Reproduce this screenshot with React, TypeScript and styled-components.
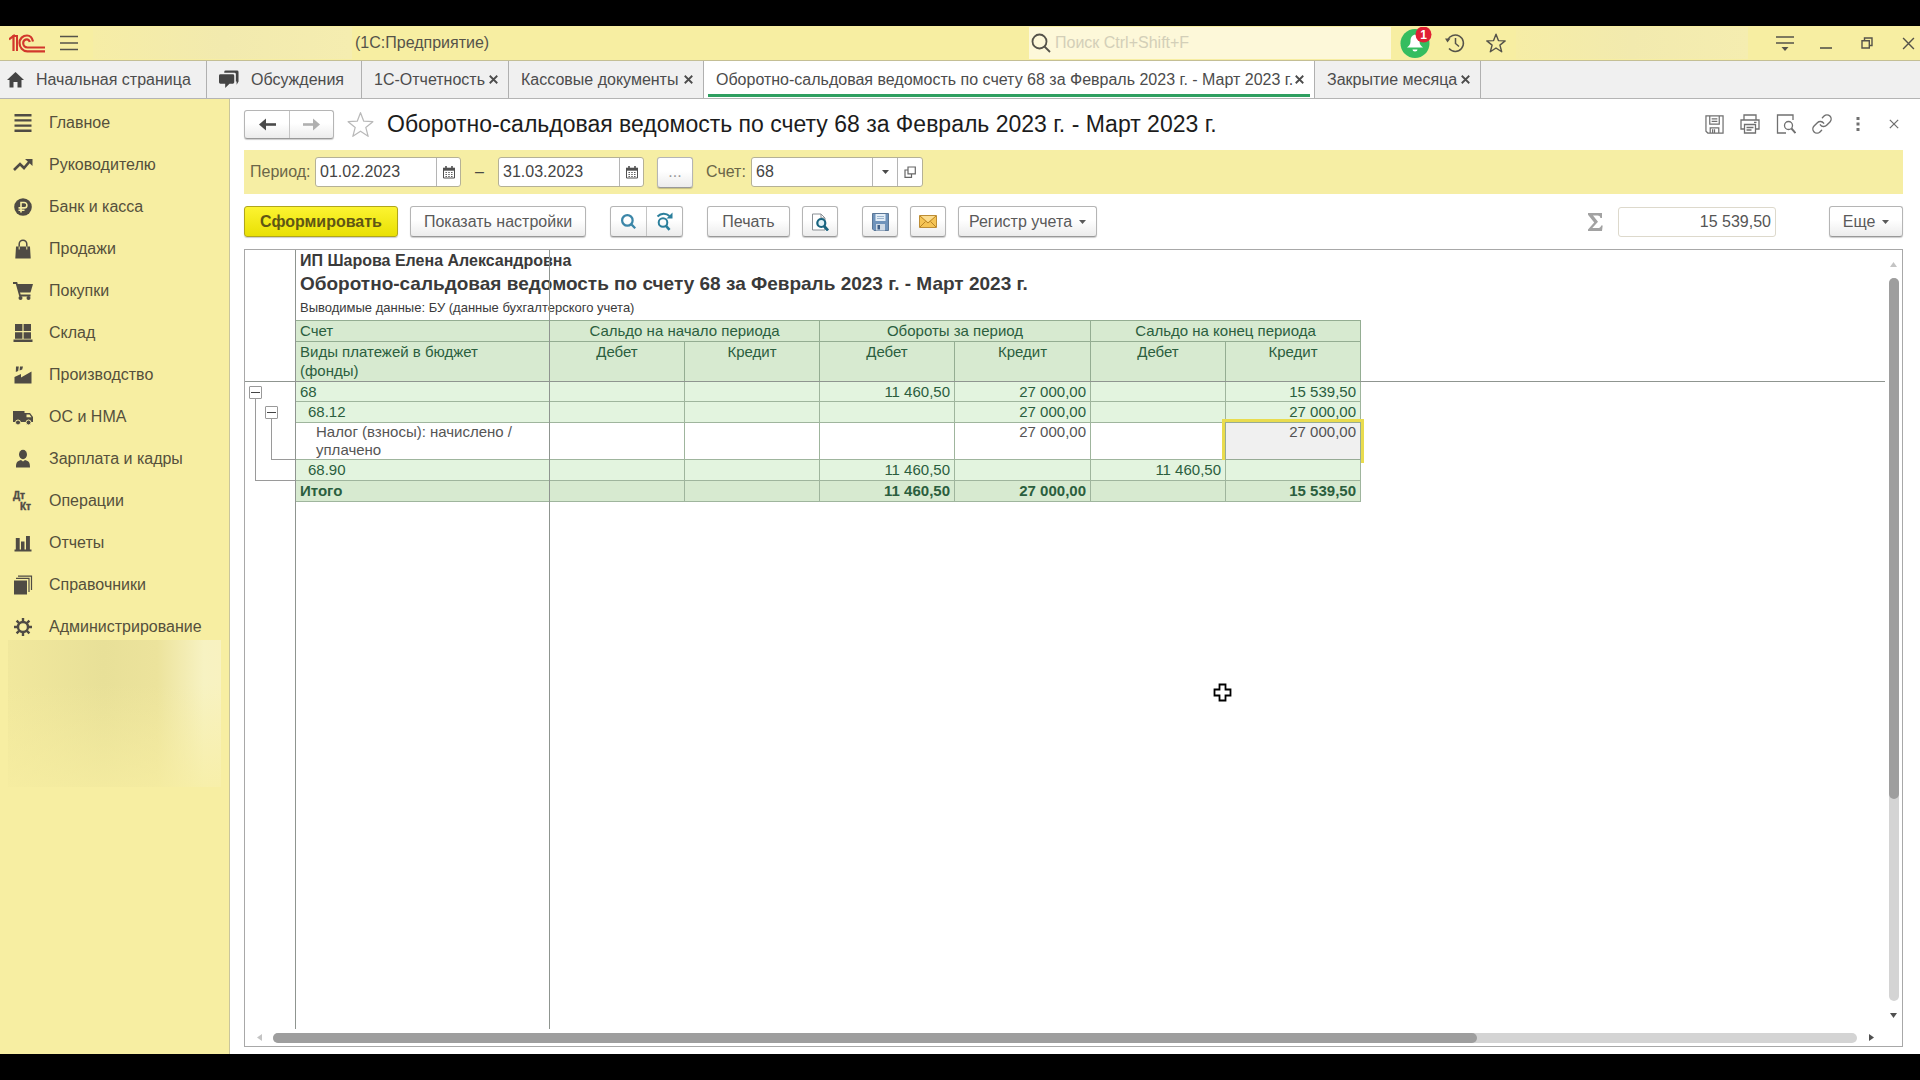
import React from "react";
import styled, { createGlobalStyle, css } from "styled-components";

const GlobalStyle = createGlobalStyle`
  *, *::before, *::after { box-sizing: border-box; }
  body { margin: 0; background: #000; }
  body, button, input { font-family: "Liberation Sans", Arial, sans-serif; font-size: 16px; color: #4a4a46; }
  button { margin: 0; padding: 0; border: 0; background: none; cursor: pointer; }
  svg { display: block; flex: none; }
`;

/* ---------- frame ---------- */

const Frame = styled.div`
  display: flex;
  flex-direction: column;
  min-height: 100vh;
  padding: 26px 0;
  background: #000;
`;

const Body = styled.div`
  flex: 1;
  display: flex;
  background: #fff;
`;

/* ---------- title bar ---------- */

const TitleBar = styled.header`
  display: flex;
  align-items: center;
  height: 34px;
  background: #f7eea2;
`;

const TitleLeft = styled.div`
  flex: 1;
  display: flex;
  align-items: center;
  height: 100%;
  padding-left: 9px;
`;

const TitleRight = styled.div`
  flex: none;
  display: flex;
  align-items: center;
  justify-content: space-between;
  width: 529px;
  height: 100%;
  padding-left: 7px;
`;

const IconButton = styled.button<{ $w?: number }>`
  display: flex;
  align-items: center;
  justify-content: center;
  width: ${(p) => p.$w ?? 36}px;
  height: 32px;
  color: #55534a;
`;

const Smudge = styled.div<{ $w: number }>`
  width: ${(p) => p.$w}px;
  height: 32px;
  background: linear-gradient(90deg, #f6eda6, #f2eaae 50%, #f5edb0);
`;

const AppName = styled.span`
  margin-left: 3px;
  color: #55534a;
`;

const Group = styled.div<{ $gap?: number }>`
  display: flex;
  align-items: center;
  gap: ${(p) => p.$gap ?? 0}px;
`;

const Search = styled.label`
  flex: none;
  display: flex;
  align-items: center;
  gap: 4px;
  width: 362px;
  height: 32px;
  padding-left: 2px;
  background: #fdf8d9;
  color: #55534a;
`;

const SearchInput = styled.input`
  flex: 1;
  min-width: 0;
  border: 0;
  padding: 0;
  outline: 0;
  background: none;
  &::placeholder { color: #d3cfb8; opacity: 1; }
`;

/* ---------- tabs ---------- */

const Tabs = styled.nav`
  display: flex;
  height: 39px;
  background: #f0f0f0;
  border-top: 1px solid #c4bf95;
  border-bottom: 1px solid #b4b4b4;
`;

const Tab = styled.div<{ $w: number; $pad?: number; $active?: boolean }>`
  flex: none;
  display: flex;
  align-items: center;
  justify-content: space-between;
  width: ${(p) => p.$w}px;
  padding: 0 10px 0 ${(p) => p.$pad ?? 12}px;
  border-right: 1px solid #b0b0b0;
  ${(p) =>
    p.$active &&
    css`
      background: linear-gradient(#2f9f60, #2f9f60) 4px 33px / calc(100% - 8px) 3px no-repeat #fff;
    `}
`;

const TabLabel = styled.button`
  display: flex;
  align-items: center;
  gap: 12px;
  white-space: nowrap;
  color: #4c4c4c;
`;

const CloseTab = styled.button`
  display: flex;
  color: #4c4c4c;
`;

/* ---------- side menu ---------- */

const Side = styled.aside`
  flex: none;
  width: 230px;
  padding-top: 3px;
  background: #f7eea2;
  border-right: 1px solid #c9c59c;
`;

const SideItem = styled.a`
  display: flex;
  align-items: center;
  gap: 15px;
  height: 42px;
  padding-left: 12px;
  color: #55503c;
  text-decoration: none;
`;

const SideHaze = styled.div`
  height: 147px;
  margin: -8px 8px 0;
  background: linear-gradient(180deg, rgba(247, 238, 162, 0) 30%, rgba(247, 238, 162, 0.75) 100%),
    linear-gradient(90deg, #f1e89d 0%, #e8e098 45%, #ece39c 70%, #f7f2c2 92%, #f8f2c0 100%);
`;

/* ---------- main ---------- */

const Main = styled.main`
  flex: 1;
  min-width: 0;
  display: flex;
  flex-direction: column;
  padding: 10px 17px 7px 14px;
`;

const Head = styled.div`
  display: flex;
  align-items: center;
  height: 30px;
  margin-bottom: 11px;
`;

const Title = styled.h1`
  flex: 1;
  margin: 0 0 0 13px;
  font-size: 23px;
  font-weight: 400;
  color: #1c1c1c;
`;

const raised = css`
  border: 1px solid #b5b5b5;
  border-bottom-color: #999;
  border-radius: 3px;
  background: linear-gradient(#fff 45%, #ececec);
  box-shadow: 0 1px 1px rgba(0, 0, 0, 0.2);
`;

const Joined = styled.div<{ $h?: number }>`
  ${raised}
  display: flex;
  height: ${(p) => p.$h ?? 31}px;
  & > button + button { border-left: 1px solid #c4c4c4; }
`;

const JoinedButton = styled.button<{ $w: number; $c?: string }>`
  display: flex;
  align-items: center;
  justify-content: center;
  width: ${(p) => p.$w}px;
  height: 100%;
  color: ${(p) => p.$c ?? "#4a4a4a"};
`;

const FavButton = styled.button`
  margin-left: 13px;
`;

const HeadActions = styled.div`
  display: flex;
  margin-right: -9px;
  & > button { color: #707070; }
`;

const FilterBar = styled.form`
  display: flex;
  align-items: center;
  height: 44px;
  margin-bottom: 12px;
  padding-left: 6px;
  background: #f6eea4;
`;

const FieldLabel = styled.label<{ $w: number }>`
  width: ${(p) => p.$w}px;
  color: #6b6648;
`;

const Field = styled.div`
  display: flex;
  height: 30px;
  border: 1px solid #b5b196;
  border-radius: 3px;
  background: #fff;
  & > button { border-left: 1px solid #b5b5b5; }
`;

const FieldInput = styled.input`
  width: 120px;
  border: 0;
  padding: 0 4px;
  outline: 0;
  background: none;
  color: #444;
`;

const Dash = styled.span`
  width: 37px;
  text-align: center;
`;

const Button = styled.button<{ $w: number; $primary?: boolean }>`
  ${raised}
  display: flex;
  align-items: center;
  justify-content: center;
  gap: 7px;
  width: ${(p) => p.$w}px;
  height: 31px;
  color: #5a5a5a;
  ${(p) =>
    p.$primary &&
    css`
      border-color: #b0a61c;
      background: linear-gradient(#fcf431, #e9e004);
      color: #5f5614;
      font-weight: 700;
    `}
`;

const PeriodButton = styled(Button)`
  margin: 0 13px;
  color: #999;
`;

const Toolbar = styled.div`
  display: flex;
  align-items: center;
  gap: 24px;
  height: 31px;
  margin-bottom: 12px;
`;

const ToolGroup = styled.div<{ $end?: boolean }>`
  display: flex;
  align-items: center;
  gap: 12px;
  margin-left: ${(p) => (p.$end ? "auto" : "0")};
`;

const SumLabel = styled.label`
  display: flex;
  align-items: center;
  gap: 15px;
  margin-right: 41px;
  color: #a2a2a2;
`;

const SumInput = styled.input`
  width: 158px;
  height: 30px;
  padding: 0 4px;
  border: 1px solid #ddd9cc;
  border-radius: 3px;
  text-align: right;
  color: #555;
`;

/* ---------- spreadsheet ---------- */

const Sheet = styled.section`
  flex: 1;
  display: grid;
  grid-template-columns: 1fr 17px;
  grid-template-rows: 1fr 17px;
  border: 1px solid #a8a8a8;
  background: #fff;
`;

const View = styled.div`
  position: relative;
  overflow: hidden;
`;

const FreezeV = styled.div<{ $x: number }>`
  position: absolute;
  top: 0;
  bottom: 0;
  left: ${(p) => p.$x}px;
  width: 1px;
  background: #8f9590;
`;

const FreezeH = styled.div`
  position: absolute;
  left: 0;
  right: 0;
  top: 131px;
  height: 1px;
  background: #8f9590;
`;

const DocHead = styled.div`
  height: 70px;
  padding-left: 55px;
  color: #3a3a3a;
  white-space: nowrap;
`;

const Org = styled.div`
  line-height: 22px;
  font-weight: 700;
`;

const DocTitle = styled.h2`
  margin: 0;
  font-size: 19px;
  line-height: 24px;
  font-weight: 700;
`;

const DocNote = styled.div`
  font-size: 13px;
  line-height: 24px;
`;

const Table = styled.table`
  table-layout: fixed;
  width: 1116px;
  border-collapse: separate;
  border-spacing: 0;
  font-size: 15px;
  color: #2b5e3e;
`;

type Tone = "head" | "light" | "plain";
const toneBg: Record<Tone, string> = { head: "#d7ead0", light: "#e3f4df", plain: "#fff" };

const Row = styled.tr<{ $h: number; $tone: Tone; $bold?: boolean }>`
  height: ${(p) => p.$h}px;
  font-weight: ${(p) => (p.$bold ? 700 : 400)};
  & > .cell {
    background: ${(p) => toneBg[p.$tone]};
    color: ${(p) => (p.$tone === "plain" ? "#555" : "inherit")};
    line-height: ${(p) => (p.$tone === "plain" ? 18 : 19)}px;
  }
`;

const cellBase = css`
  position: relative;
  padding: 0 4px;
  vertical-align: top;
  border-right: 1px solid #9fb59d;
  border-bottom: 1px solid #9fb59d;
`;

const HeadCell = styled.th<{ $left?: boolean; $top?: boolean }>`
  ${cellBase}
  border-color: #94ad92;
  border-top: ${(p) => (p.$top ? "1px solid #94ad92" : "0")};
  font-weight: 400;
  text-align: ${(p) => (p.$left ? "left" : "center")};
`;

const NameCell = styled.th<{ $level: number }>`
  ${cellBase}
  font-weight: inherit;
  text-align: left;
  padding-left: ${(p) => 4 + p.$level * 8}px;
`;

const NumCell = styled.td`
  ${cellBase}
  text-align: right;
  white-space: nowrap;
`;

const Selection = styled.div`
  position: absolute;
  inset: -4px;
  border: 3px solid #e9dc4e;
  background: rgba(60, 60, 60, 0.08);
`;

const TreeCell = styled.td`
  position: relative;
  padding: 0;
`;

const Branch = styled.div<{ $x: number; $from: number; $elbow?: boolean }>`
  position: absolute;
  top: ${(p) => p.$from}px;
  bottom: 0;
  left: ${(p) => p.$x}px;
  right: 0;
  border-left: 1px solid #9a9a9a;
  border-bottom: ${(p) => (p.$elbow ? "1px solid #9a9a9a" : "0")};
`;

const Toggle = styled.button<{ $level: number }>`
  position: relative;
  z-index: 1;
  display: flex;
  align-items: center;
  justify-content: center;
  width: 13px;
  height: 13px;
  margin-left: ${(p) => 4 + p.$level * 16}px;
  border: 1px solid #999;
  border-radius: 1px;
  background: #fff;
  &::before {
    content: "";
    width: 9px;
    height: 1px;
    background: #444;
  }
`;

const ScrollBar = styled.div<{ $vertical?: boolean }>`
  display: flex;
  flex-direction: ${(p) => (p.$vertical ? "column" : "row")};
  align-items: center;
`;

const ScrollArrow = styled.button<{ $c: string }>`
  display: flex;
  align-items: center;
  justify-content: center;
  flex: none;
  width: 28px;
  height: 28px;
  color: ${(p) => p.$c};
`;

const Track = styled.div<{ $vertical?: boolean }>`
  flex: 1;
  width: ${(p) => (p.$vertical ? "10px" : "auto")};
  height: ${(p) => (p.$vertical ? "auto" : "10px")};
  border-radius: 5px;
  background: #d4d4d4;
`;

const Thumb = styled.div<{ $vertical?: boolean }>`
  width: ${(p) => (p.$vertical ? "100%" : "76%")};
  height: ${(p) => (p.$vertical ? "72%" : "100%")};
  border-radius: 5px;
  background: #9e9e9e;
`;

const Pointer = styled.svg`
  position: absolute;
  left: 968px;
  top: 433px;
`;

/* ---------- icons ---------- */

const Logo = () => (
  <svg width="36" height="19" viewBox="0 0 36 19" fill="none" stroke="#d2372c" strokeWidth="2.2">
    <path d="M0 5.5 4.5 2v15" />
    <path d="M3.5 2H8v15" strokeWidth="2" />
    <path d="M24 7.5C23.2 3.5 20.5 1.5 18 1.5c-4.200 0-7.500 3.200-7.500 7.500s3.200 8.300 7.800 8.300H36" />
    <path d="M20.8 8C20.3 6.2 19.2 5.3 17.9 5.3c-2.100 0-3.700 1.600-3.700 3.800 0 2.400 1.700 4.400 4.300 4.400H36" />
  </svg>
);

const Burger = () => (
  <svg width="18" height="16" viewBox="0 0 18 16" stroke="currentColor" strokeWidth="1.6">
    <path d="M0 1.5h18M0 8h18M0 14.5h18" />
  </svg>
);

const Magnifier = ({ size = 20, width = 1.8 }: { size?: number; width?: number }) => (
  <svg width={size} height={size} viewBox="0 0 20 20" fill="none" stroke="currentColor" strokeWidth={width}>
    <circle cx="8.5" cy="8.5" r="7" />
    <path d="M13.5 13.5 19 19" />
  </svg>
);

const Bell = () => (
  <svg width="32" height="32" viewBox="0 0 32 32">
    <circle cx="15" cy="16.5" r="14.5" fill="#35bd5f" />
    <path d="M15 7.5c-3.500 1-4.500 3.500-4.500 7 0 3-1.500 4.500-3.500 6h16c-2-1.500-3.500-3-3.500-6 0-3.500-1-6-4.500-7Z" fill="#fff" />
    <path d="M12.5 22.5h5a2.5 2 0 0 1-5 0Z" fill="#fff" />
    <circle cx="23.5" cy="7.5" r="8" fill="#e01f34" />
    <text x="23.5" y="11.5" fill="#fff" fontSize="12" fontWeight="700" textAnchor="middle">1</text>
  </svg>
);

const History = () => (
  <svg width="20" height="20" viewBox="0 0 20 20" fill="none" stroke="currentColor" strokeWidth="1.5">
    <path d="M2.6 7.2A8.2 8.2 0 1 1 4 15.6" />
    <path d="M10.5 5v5.500l3.500 3" />
    <path d="M0 5.5h5.500L2.5 9.5Z" fill="currentColor" stroke="none" />
  </svg>
);

const Star = ({ size, color, width }: { size: number; color: string; width: number }) => (
  <svg width={size} height={size} viewBox="0 0 24 24" fill="none" stroke={color} strokeWidth={width} strokeLinejoin="round">
    <path d="m12 1.5 2.9 7.6 8.1.4-6.300 5.100 2.100 7.900L12 18l-6.800 4.500 2.100-7.900L1 9.5l8.100-.4Z" />
  </svg>
);

const PanelMenu = () => (
  <svg width="18" height="18" viewBox="0 0 18 18" stroke="currentColor" strokeWidth="1.5">
    <path d="M0 3h18M0 9h18" />
    <path d="M5.5 13h7L9 17Z" fill="currentColor" stroke="none" />
  </svg>
);

const Minimize = () => (
  <svg width="12" height="14" viewBox="0 0 12 14" stroke="currentColor" strokeWidth="1.6">
    <path d="M0 12h12" />
  </svg>
);

const Restore = () => (
  <svg width="12" height="12" viewBox="0 0 12 12" fill="none" stroke="currentColor" strokeWidth="1.4">
    <path d="M1 3.7h7.300V11H1ZM3.5 3.5V1H11v7.500H8.5" />
  </svg>
);

const Cross = ({ size, width }: { size: number; width: number }) => (
  <svg width={size} height={size} viewBox="0 0 12 12" stroke="currentColor" strokeWidth={width}>
    <path d="m1 1 10 10M11 1 1 11" />
  </svg>
);

const Home = () => (
  <svg width="17" height="16" viewBox="0 0 17 16" fill="#444">
    <path d="M8.5 0 0 8h2.500v7.500h4V10h4v5.500h4V8H17Z" />
  </svg>
);

const Chat = () => (
  <svg width="20" height="19" viewBox="0 0 21 19" fill="#444">
    <path d="M7 0h12a1.5 1.5 0 0 1 1.5 1.5v10L18.5 15v-3.500h-.8V4A1.5 1.5 0 0 0 16.2 2.5H5.5v-1A1.5 1.5 0 0 1 7 0Z" />
    <path d="M1.5 4h13A1.5 1.5 0 0 1 16 5.5v7a1.5 1.5 0 0 1-1.5 1.5H11L6.5 18.5V14h-5A1.5 1.5 0 0 1 0 12.5v-7A1.5 1.5 0 0 1 1.5 4Z" />
  </svg>
);

const Arrow = ({ flip }: { flip?: boolean }) => (
  <svg width="17" height="13" viewBox="0 0 17 13" fill="none" stroke="currentColor" strokeWidth="2.6">
    <g transform={flip ? "translate(17 0) scale(-1 1)" : undefined}>
      <path d="M2 6.5h15" />
      <path d="M0 6.5 7 .5v12Z" fill="currentColor" stroke="none" />
    </g>
  </svg>
);

const Floppy = () => (
  <svg width="19" height="19" viewBox="0 0 20 20" fill="none" stroke="currentColor" strokeWidth="1.3">
    <path d="M1 1h18v18H3l-2-2ZM5 1v8.500h10V1M7 4h6M7 6.7h6M5.5 19v-5.500h9V19M8 15v4M10 15v4" />
  </svg>
);

const Printer = () => (
  <svg width="20" height="20" viewBox="0 0 20 20" fill="none" stroke="currentColor" strokeWidth="1.3">
    <path d="M4 6V1h12v5M4 15H1V6h18v9h-3M4.5 10.5h11V19h-11ZM6.5 13.5h7M6.5 16h5M14 8.3h2.500" />
  </svg>
);

const PagePreview = () => (
  <svg width="20" height="20" viewBox="0 0 20 20" fill="none" stroke="currentColor" strokeWidth="1.3">
    <path d="M17 6V1H1.500v18H10" />
    <circle cx="12.5" cy="11.5" r="4" />
    <path d="m15.5 14.5 4 4.500" strokeWidth="1.9" />
  </svg>
);

const Chain = () => (
  <svg width="20" height="20" viewBox="0 0 24 24" fill="none" stroke="currentColor" strokeWidth="1.7" strokeLinecap="round">
    <path d="M10 13a5 5 0 0 0 7.54.54l4-4a5 5 0 0 0-7.07-7.07l-2 2" />
    <path d="M14 11a5 5 0 0 0-7.54-.54l-4 4a5 5 0 0 0 7.07 7.07l2-2" />
  </svg>
);

const Dots = () => (
  <svg width="4" height="16" viewBox="0 0 4 16" fill="currentColor">
    <path d="M.5 1h3v3h-3ZM.5 6.5h3v3h-3ZM.5 12h3v3h-3Z" />
  </svg>
);

const Calendar = () => (
  <svg width="12" height="13" viewBox="0 0 12 13" fill="none" stroke="#505050">
    <path d="M.5 2.5h11v9.500H.5Z" />
    <path d="M0 3.2h12" strokeWidth="3" />
    <path d="M3 0v3M9 0v3" strokeWidth="1.6" />
    <path d="M2.5 6.5h7M2.5 8.5h7M2.5 10.5h7" strokeDasharray="1.4 1.4" />
  </svg>
);

const Caret = () => (
  <svg width="7" height="4" viewBox="0 0 7 4" fill="currentColor">
    <path d="M0 0h7L3.5 4Z" />
  </svg>
);

const OpenForm = () => (
  <svg width="12" height="12" viewBox="0 0 12 12" fill="none" stroke="#666" strokeWidth="1.2">
    <path d="M4 1h7.300v6.800H4Z" />
    <path d="M4 4H1v7.300h6.500V8" />
  </svg>
);

const FindNext = () => (
  <svg width="18" height="19" viewBox="0 0 18 19" fill="none" stroke="currentColor" strokeWidth="2">
    <circle cx="7" cy="10.5" r="4.3" />
    <path d="m10 13.8 3.5 4" strokeWidth="2.6" />
    <path d="M1.5 4.5C5 1 10 .8 13.5 4" />
    <path d="M16.5.5v6h-6Z" fill="currentColor" stroke="none" />
  </svg>
);

const DocPreview = () => (
  <svg width="18" height="18" viewBox="0 0 18 18" fill="none">
    <path d="M1.5 1h8.500l4 4v12H1.500Z" fill="#fff" stroke="#8a8f94" />
    <path d="M10 1v4h4" stroke="#8a8f94" />
    <circle cx="10.3" cy="10" r="4" fill="#dff1f7" stroke="#17637f" strokeWidth="2.2" />
    <path d="m13 13 4 4.500" stroke="#17637f" strokeWidth="2.8" />
  </svg>
);

const DiskColor = () => (
  <svg width="17" height="18" viewBox="0 0 17 18">
    <path d="M.5.5h16v17H2l-1.500-1.500Z" fill="#6f93bb" stroke="#5a7797" />
    <path d="M3.5 1h10v7h-10Z" fill="#e4eef7" />
    <path d="M5 3.5h7M5 5.5h7" stroke="#9cb6cf" />
    <path d="M4 11h9v6.500H4Z" fill="#cfdae6" />
    <path d="M5.5 12h2.500v4.500H5.500Z" fill="#3f5f86" />
  </svg>
);

const Mail = () => (
  <svg width="18" height="13" viewBox="0 0 18 13" fill="none">
    <path d="M.5.5h17v12H.5Z" fill="#f5c455" stroke="#bd8d35" />
    <path d="m1 1 8 7 8-7M1 12l5.500-5.500M17 12l-5.500-5.500" stroke="#b98527" />
    <path d="M2 1h14L9 7Z" fill="#fbdc8f" />
  </svg>
);

const Sigma = () => (
  <svg width="15" height="18" viewBox="0 0 15 18" fill="currentColor">
    <path d="M0 0h14v5h-1.600C12 3.3 11.2 2.6 9.5 2.6H5L10 8.7 4.3 15h5.500c1.800 0 2.800-.8 3.400-2.600h1.500L14 18H0v-1.600L6.2 9.4 0 1.7Z" />
  </svg>
);

const menuInk = "#4f4b44";
const menuIcons: Record<string, React.ReactNode> = {
  main: <path d="M1.500 2.200h17M1.500 7.400h17M1.500 12.600h17M1.500 17.800h17" stroke={menuInk} strokeWidth="2.4" />,
  trend: (
    <>
      <path d="m1 15 6-6 4 4 6-7" stroke={menuInk} strokeWidth="2.6" fill="none" />
      <path d="M12 4h7.500v7Z" fill={menuInk} />
    </>
  ),
  ruble: (
    <>
      <circle cx="10" cy="10" r="8.8" fill={menuInk} />
      <path d="M8 15.5V5.500h3.200a2.700 2.700 0 0 1 0 5.400H5.500M5.500 13.200h6" stroke="#f7eea2" strokeWidth="1.6" fill="none" />
    </>
  ),
  bag: (
    <>
      <path d="M3 7.500h14l.7 12H2.300Z" fill={menuInk} />
      <path d="M6.200 9V5a3.800 3.800 0 0 1 7.600 0v4" stroke={menuInk} strokeWidth="1.5" fill="none" />
      <path d="M6.200 7.500v3M13.800 7.500v3" stroke="#f7eea2" strokeWidth="1" />
    </>
  ),
  cart: (
    <>
      <path d="M0 2h3.500L7 14.500h10.500" stroke={menuInk} strokeWidth="1.8" fill="none" />
      <path d="M3.500 3H20l-2.500 8.500H6Z" fill={menuInk} />
      <circle cx="7.5" cy="17" r="2" fill={menuInk} />
      <circle cx="15.5" cy="17" r="2" fill={menuInk} />
    </>
  ),
  store: <path d="M2 1h7.400v7H2ZM10.600 1H18v7h-7.400ZM2 9.200h7.400v6.500H2ZM10.600 9.200H18v6.500h-7.400ZM.5 16.500h19V19H.5Z" fill={menuInk} />,
  plant: <path d="M1.500 18.500v-6.500l6.500-3v3.500l10.500-6v12ZM3 1.500h2.800L5.200 6 2.800 7ZM7 1.500h3L9.200 4.500 6.600 5.500Z" fill={menuInk} />,
  truck: (
    <>
      <path d="M0 4h11.500v11H0ZM11.500 6H17l3 4v5h-8.500Z" fill={menuInk} />
      <path d="M13.500 7.500h3l2 2.700h-5Z" fill="#f7eea2" />
      <circle cx="5" cy="15.5" r="2.5" fill={menuInk} stroke="#f7eea2" />
      <circle cx="15.5" cy="15.5" r="2.5" fill={menuInk} stroke="#f7eea2" />
    </>
  ),
  person: (
    <>
      <ellipse cx="10" cy="5.5" rx="4" ry="4.7" fill={menuInk} />
      <path d="M3 18.500c0-5 1-6.500 5-7.500l2 1.500 2-1.500c4 1 5 2.500 5 7.500Z" fill={menuInk} />
    </>
  ),
  ops: (
    <g fill={menuInk} stroke={menuInk} strokeWidth="0.4" fontSize="10" fontWeight="700">
      <text x="0" y="8">Дт</text>
      <text x="7" y="19">Кт</text>
    </g>
  ),
  chart: <path d="M1.500 16.500h17V18.500h-17ZM2.800 5h3.900v12H2.800ZM8 8.500h3.500V17H8ZM13 3h3.900v14H13Z" fill={menuInk} />,
  books: (
    <>
      <path d="M1 5.500h13v14H1Z" fill={menuInk} />
      <path d="M3 3.400h13V17M5 1.200h13.500V15" stroke={menuInk} strokeWidth="1.2" fill="none" />
    </>
  ),
  gear: (
    <>
      <circle cx="10" cy="10" r="5" stroke={menuInk} strokeWidth="2.4" fill="none" />
      <path
        d="M10 1v3.500M10 15.500V19M1 10h3.500M15.500 10H19M3.600 3.600l2.500 2.500M13.900 13.900l2.500 2.500M3.600 16.400l2.500-2.500M13.900 6.100l2.500-2.500"
        stroke={menuInk}
        strokeWidth="2.4"
      />
    </>
  ),
};

/* ---------- data ---------- */

const menu: [string, string][] = [
  ["main", "Главное"],
  ["trend", "Руководителю"],
  ["ruble", "Банк и касса"],
  ["bag", "Продажи"],
  ["cart", "Покупки"],
  ["store", "Склад"],
  ["plant", "Производство"],
  ["truck", "ОС и НМА"],
  ["person", "Зарплата и кадры"],
  ["ops", "Операции"],
  ["chart", "Отчеты"],
  ["books", "Справочники"],
  ["gear", "Администрирование"],
];

const tabs = [
  { label: "1С-Отчетность", w: 147 },
  { label: "Кассовые документы", w: 195 },
  { label: "Оборотно-сальдовая ведомость по счету 68 за Февраль 2023 г. - Март 2023 г.", w: 611, active: true },
  { label: "Закрытие месяца", w: 166 },
];

type Line = {
  name: string;
  level: number;
  h: number;
  tone: Tone;
  bold?: boolean;
  tree?: React.ReactNode;
  values: string[];
  selected?: number;
};

const lines: Line[] = [
  {
    name: "68", level: 0, h: 20, tone: "light",
    tree: (<><Branch $x={10} $from={10} /><Toggle $level={0} aria-label="Свернуть 68" /></>),
    values: ["", "", "11 460,50", "27 000,00", "", "15 539,50"],
  },
  {
    name: "68.12", level: 1, h: 21, tone: "light",
    tree: (<><Branch $x={10} $from={0} /><Branch $x={26} $from={10} /><Toggle $level={1} aria-label="Свернуть 68.12" /></>),
    values: ["", "", "", "27 000,00", "", "27 000,00"],
  },
  {
    name: "Налог (взносы): начислено / уплачено", level: 2, h: 37, tone: "plain",
    tree: (<><Branch $x={10} $from={0} /><Branch $x={26} $from={0} $elbow /></>),
    values: ["", "", "", "27 000,00", "", "27 000,00"], selected: 5,
  },
  {
    name: "68.90", level: 1, h: 21, tone: "light",
    tree: <Branch $x={10} $from={0} $elbow />,
    values: ["", "", "11 460,50", "", "11 460,50", ""],
  },
  {
    name: "Итого", level: 0, h: 21, tone: "head", bold: true,
    values: ["", "", "11 460,50", "27 000,00", "", "15 539,50"],
  },
];

const columnWidths = [51, 254, 135, 135, 135, 136, 135, 135];

/* ---------- page ---------- */

export default function App() {
  return (
    <Frame>
      <GlobalStyle />
      <TitleBar>
        <TitleLeft>
          <Logo />
          <IconButton $w={48} aria-label="Меню"><Burger /></IconButton>
          <Smudge $w={259} />
          <AppName>(1С:Предприятие)</AppName>
        </TitleLeft>
        <Search>
          <Magnifier />
          <SearchInput type="search" placeholder="Поиск Ctrl+Shift+F" aria-label="Поиск" />
        </Search>
        <TitleRight>
          <Group>
            <IconButton aria-label="Уведомления"><Bell /></IconButton>
            <IconButton $w={42} aria-label="История"><History /></IconButton>
            <IconButton $w={40} aria-label="Избранное"><Star size={20} color="#55534a" width={1.7} /></IconButton>
            <Smudge $w={232} />
          </Group>
          <Group $gap={17}>
            <IconButton $w={24} aria-label="Настройка панели"><PanelMenu /></IconButton>
            <IconButton $w={24} aria-label="Свернуть"><Minimize /></IconButton>
            <IconButton $w={24} aria-label="Восстановить"><Restore /></IconButton>
            <IconButton $w={24} aria-label="Закрыть"><Cross size={13} width={1.3} /></IconButton>
          </Group>
        </TitleRight>
      </TitleBar>

      <Tabs>
        <Tab $w={207} $pad={7}>
          <TabLabel><Home />Начальная страница</TabLabel>
        </Tab>
        <Tab $w={155}>
          <TabLabel><Chat />Обсуждения</TabLabel>
        </Tab>
        {tabs.map((t) => (
          <Tab key={t.label} $w={t.w} $active={t.active}>
            <TabLabel>{t.label}</TabLabel>
            <CloseTab aria-label={`Закрыть ${t.label}`}><Cross size={9} width={2.4} /></CloseTab>
          </Tab>
        ))}
      </Tabs>

      <Body>
        <Side>
          {menu.map(([icon, label]) => (
            <SideItem key={icon} href="#">
              <svg width="22" height="22" viewBox="-1 -1 22 22">{menuIcons[icon]}</svg>
              {label}
            </SideItem>
          ))}
          <SideHaze />
        </Side>

        <Main>
          <Head>
            <Joined $h={29}>
              <JoinedButton $w={44} aria-label="Назад"><Arrow /></JoinedButton>
              <JoinedButton $w={44} $c="#b0b0b0" aria-label="Вперед"><Arrow flip /></JoinedButton>
            </Joined>
            <FavButton aria-label="В избранное"><Star size={27} color="#b9b9b9" width={1.1} /></FavButton>
            <Title>Оборотно-сальдовая ведомость по счету 68 за Февраль 2023 г. - Март 2023 г.</Title>
            <HeadActions>
              <IconButton aria-label="Сохранить"><Floppy /></IconButton>
              <IconButton aria-label="Печать"><Printer /></IconButton>
              <IconButton aria-label="Просмотр"><PagePreview /></IconButton>
              <IconButton aria-label="Ссылка"><Chain /></IconButton>
              <IconButton aria-label="Еще"><Dots /></IconButton>
              <IconButton aria-label="Закрыть"><Cross size={10} width={1.5} /></IconButton>
            </HeadActions>
          </Head>

          <FilterBar>
            <FieldLabel $w={65} htmlFor="from">Период:</FieldLabel>
            <Field>
              <FieldInput id="from" defaultValue="01.02.2023" />
              <JoinedButton type="button" $w={24} aria-label="Календарь"><Calendar /></JoinedButton>
            </Field>
            <Dash>–</Dash>
            <Field>
              <FieldInput id="to" aria-label="Конец периода" defaultValue="31.03.2023" />
              <JoinedButton type="button" $w={24} aria-label="Календарь"><Calendar /></JoinedButton>
            </Field>
            <PeriodButton type="button" $w={36}>...</PeriodButton>
            <FieldLabel $w={45} htmlFor="account">Счет:</FieldLabel>
            <Field>
              <FieldInput id="account" defaultValue="68" />
              <JoinedButton type="button" $w={25} aria-label="Выбрать"><Caret /></JoinedButton>
              <JoinedButton type="button" $w={25} aria-label="Открыть"><OpenForm /></JoinedButton>
            </Field>
          </FilterBar>

          <Toolbar>
            <ToolGroup>
              <Button $w={154} $primary>Сформировать</Button>
              <Button $w={176}>Показать настройки</Button>
            </ToolGroup>
            <Joined>
              <JoinedButton $w={35} $c="#3b86a8" aria-label="Найти"><Magnifier size={15} width={3} /></JoinedButton>
              <JoinedButton $w={36} $c="#2b7f9c" aria-label="Найти далее"><FindNext /></JoinedButton>
            </Joined>
            <ToolGroup>
              <Button $w={83}>Печать</Button>
              <Button $w={36} aria-label="Предварительный просмотр"><DocPreview /></Button>
            </ToolGroup>
            <ToolGroup>
              <Button $w={36} aria-label="Сохранить файл"><DiskColor /></Button>
              <Button $w={36} aria-label="Отправить"><Mail /></Button>
              <Button $w={139}>Регистр учета<Caret /></Button>
            </ToolGroup>
            <ToolGroup $end>
              <SumLabel>
                <Sigma />
                <SumInput readOnly value="15 539,50" aria-label="Сумма" />
              </SumLabel>
              <Button $w={74}>Еще<Caret /></Button>
            </ToolGroup>
          </Toolbar>

          <Sheet>
            <View>
              <DocHead>
                <Org>ИП Шарова Елена Александровна</Org>
                <DocTitle>Оборотно-сальдовая ведомость по счету 68 за Февраль 2023 г. - Март 2023 г.</DocTitle>
                <DocNote>Выводимые данные: БУ (данные бухгалтерского учета)</DocNote>
              </DocHead>
              <Table>
                <colgroup>
                  {columnWidths.map((w, i) => <col key={i} width={w} />)}
                </colgroup>
                <thead>
                  <Row $h={22} $tone="head">
                    <TreeCell />
                    <HeadCell className="cell" $left $top>Счет</HeadCell>
                    <HeadCell className="cell" $top colSpan={2}>Сальдо на начало периода</HeadCell>
                    <HeadCell className="cell" $top colSpan={2}>Обороты за период</HeadCell>
                    <HeadCell className="cell" $top colSpan={2}>Сальдо на конец периода</HeadCell>
                  </Row>
                  <Row $h={40} $tone="head">
                    <TreeCell />
                    <HeadCell className="cell" $left>Виды платежей в бюджет<br />(фонды)</HeadCell>
                    {[0, 1, 2].map((i) => (
                      <React.Fragment key={i}>
                        <HeadCell className="cell">Дебет</HeadCell>
                        <HeadCell className="cell">Кредит</HeadCell>
                      </React.Fragment>
                    ))}
                  </Row>
                </thead>
                <tbody>
                  {lines.map((l) => (
                    <Row key={l.name} $h={l.h} $tone={l.tone} $bold={l.bold}>
                      <TreeCell>{l.tree}</TreeCell>
                      <NameCell className="cell" scope="row" $level={l.level}>{l.name}</NameCell>
                      {l.values.map((v, i) => (
                        <NumCell className="cell" key={i}>
                          {v}
                          {l.selected === i && <Selection />}
                        </NumCell>
                      ))}
                    </Row>
                  ))}
                </tbody>
              </Table>
              <FreezeV $x={50} />
              <FreezeV $x={304} />
              <FreezeH />
              <Pointer width="19" height="19" viewBox="0 0 19 19">
                <path d="M6.5 1.5h6v5h5v6h-5v5h-6v-5h-5v-6h5Z" fill="#fff" stroke="#000" strokeWidth="1.8" />
              </Pointer>
            </View>
            <ScrollBar $vertical>
              <ScrollArrow $c="#c4c4c4" aria-label="Вверх">
                <svg width="7" height="5" viewBox="0 0 7 5" fill="currentColor"><path d="M0 5h7L3.5 0Z" /></svg>
              </ScrollArrow>
              <Track $vertical><Thumb $vertical /></Track>
              <ScrollArrow $c="#505050" aria-label="Вниз">
                <svg width="7" height="5" viewBox="0 0 7 5" fill="currentColor"><path d="M0 0h7L3.5 5Z" /></svg>
              </ScrollArrow>
            </ScrollBar>
            <ScrollBar>
              <ScrollArrow $c="#c4c4c4" aria-label="Влево">
                <svg width="5" height="7" viewBox="0 0 5 7" fill="currentColor"><path d="M5 0v7L0 3.5Z" /></svg>
              </ScrollArrow>
              <Track><Thumb /></Track>
              <ScrollArrow $c="#505050" aria-label="Вправо">
                <svg width="5" height="7" viewBox="0 0 5 7" fill="currentColor"><path d="M0 0v7l5-3.500Z" /></svg>
              </ScrollArrow>
            </ScrollBar>
          </Sheet>
        </Main>
      </Body>
    </Frame>
  );
}
